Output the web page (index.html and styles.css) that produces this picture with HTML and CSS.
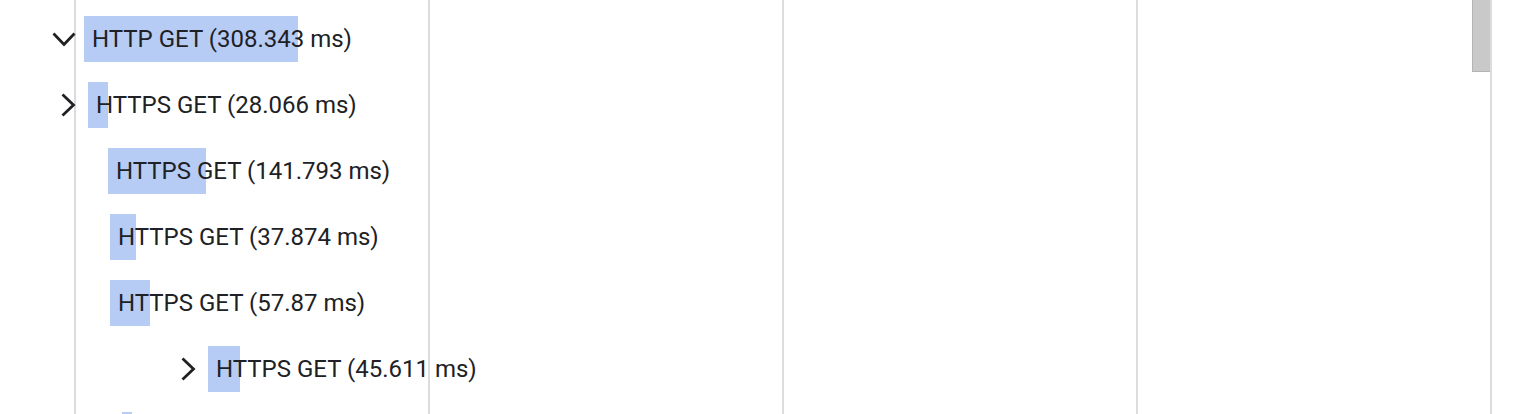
FILE: index.html
```html
<!DOCTYPE html>
<html lang="en">
<head>
<meta charset="utf-8">
<title>Trace</title>
<link rel="stylesheet" href="styles.css">
</head>
<body>
<div class="viewport">
  <div class="rows">
    <div class="row" style="padding-left:52px">
      <span class="toggle">
        <svg viewBox="0 0 24 24" width="24" height="24"><polyline points="1.5,6.5 12,17.5 22.5,6.5" /></svg>
      </span>
      <span class="label" style="background-size:214px 46px">HTTP GET (308.343 ms)</span>
    </div>
    <div class="row" style="padding-left:56px">
      <span class="toggle">
        <svg viewBox="0 0 24 24" width="24" height="24"><polyline points="6.5,1.5 17.5,12 6.5,22.5" /></svg>
      </span>
      <span class="label" style="background-size:20px 46px">HTTPS GET (28.066 ms)</span>
    </div>
    <div class="row" style="padding-left:76px">
      <span class="toggle"></span>
      <span class="label" style="background-size:98px 46px">HTTPS GET (141.793 ms)</span>
    </div>
    <div class="row" style="padding-left:78px">
      <span class="toggle"></span>
      <span class="label" style="background-size:26px 46px">HTTPS GET (37.874 ms)</span>
    </div>
    <div class="row" style="padding-left:78px">
      <span class="toggle"></span>
      <span class="label" style="background-size:40px 46px">HTTPS GET (57.87 ms)</span>
    </div>
    <div class="row" style="padding-left:176px">
      <span class="toggle">
        <svg viewBox="0 0 24 24" width="24" height="24"><polyline points="6.5,1.5 17.5,12 6.5,22.5" /></svg>
      </span>
      <span class="label" style="background-size:32px 46px">HTTPS GET (45.611 ms)</span>
    </div>
    <div class="row" style="padding-left:90px">
      <span class="toggle"></span>
      <span class="label bar-only" style="background-size:10px 46px"></span>
    </div>
  </div>
  <div class="scrollbar"><div class="thumb"></div></div>
</div>
</body>
</html>
```
FILE: styles.css
```css
html, body {
  margin: 0;
  padding: 0;
  background: #ffffff;
  overflow: hidden;
}

body {
  font-family: Roboto, "Liberation Sans", Arial, sans-serif;
  color: #202124;
}

.viewport {
  position: relative;
  width: 1536px;
  height: 414px;
  overflow: hidden;
  background-image: linear-gradient(to right, #dcdcdc 0, #dcdcdc 2px, transparent 2px);
  background-size: 354px 100%;
  background-position: 74px 0;
  background-repeat: repeat-x;
}

.rows {
  display: flex;
  flex-direction: column;
  padding-top: 16px;
}

.row {
  display: flex;
  align-items: center;
  height: 46px;
  margin-bottom: 20px;
  flex-shrink: 0;
}

.toggle {
  width: 24px;
  height: 24px;
  margin-right: 8px;
  flex-shrink: 0;
  display: flex;
  align-items: center;
  justify-content: center;
}

.toggle svg {
  display: block;
  overflow: visible;
}

.toggle polyline {
  fill: none;
  stroke: #202124;
  stroke-width: 2.8;
  stroke-linecap: butt;
  stroke-linejoin: miter;
}

.label {
  display: block;
  height: 46px;
  line-height: 46px;
  padding-left: 8px;
  font-size: 24px;
  white-space: nowrap;
  background-color: transparent;
  background-image: linear-gradient(#b6ccf5, #b6ccf5);
  background-repeat: no-repeat;
  background-position: 0 0;
}

.bar-only {
  width: 10px;
  padding-left: 0;
}

.scrollbar {
  position: absolute;
  top: 0;
  left: 1472px;
  width: 18px;
  height: 414px;
}

.thumb {
  height: 72px;
  background: #c9c9c9;
  border-left: 1px solid #b4b4b4;
  border-bottom: 1px solid #b4b4b4;
  box-sizing: border-box;
}
```
